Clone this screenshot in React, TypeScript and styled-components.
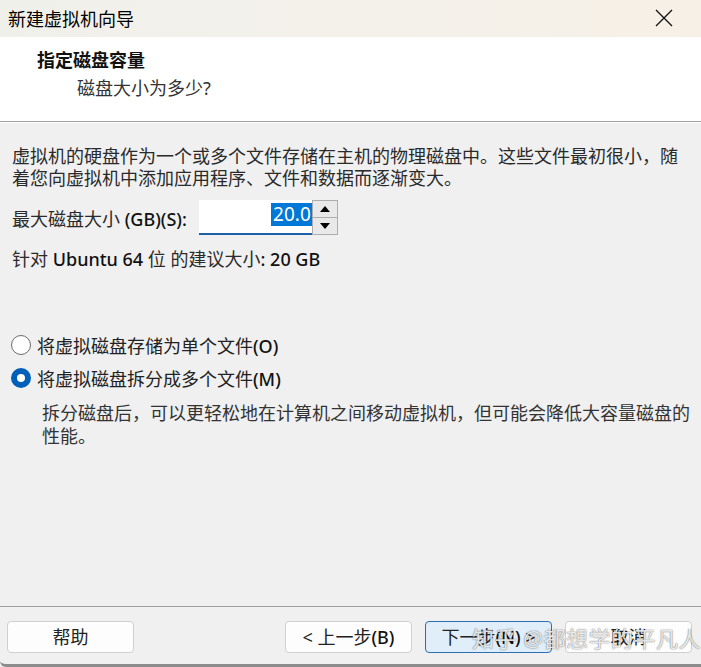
import React, { FC } from 'react'
import styled, { createGlobalStyle } from 'styled-components'

const GlobalStyle = createGlobalStyle`
	html, body {
		margin: 0;
		padding: 0;
		background: #f0f0f0;
	}
	* {
		box-sizing: border-box;
	}
`

const FONT = `"Noto Sans", "Noto Sans CJK SC", sans-serif`

const Window = styled.div`
	position: relative;
	width: 701px;
	height: 667px;
	display: flex;
	flex-direction: column;
	overflow: hidden;
	font-family: ${FONT};
	font-size: 18px;
	color: #222;
	background: #f0f0f0;
	border-bottom: 3px solid #8c8c8c;
	border-bottom-left-radius: 6px;
`

const TitleBar = styled.div`
	height: 37px;
	flex: none;
	display: flex;
	align-items: center;
	justify-content: space-between;
	padding: 0 28px 2px 8px;
	background: linear-gradient(90deg, #f0f0ea 0%, #f4f1ea 60%, #f7f0e6 100%);
	color: #000;
`

const Header = styled.div`
	height: 85px;
	flex: none;
	background: #fff;
	padding: 12px 0 0 37px;
	border-bottom: 1px solid #a0a0a0;
`

const HeaderTitle = styled.div`
	font-weight: 700;
	line-height: 22px;
	color: #111;
`

const HeaderSub = styled.div`
	margin-top: 6px;
	padding-left: 40px;
	line-height: 22px;
	color: #333;
`

const Body = styled.div`
	flex: 1;
	padding: 22px 8px 0 12px;
	border-top: 1px solid #fff;
`

const Paragraph = styled.p<{ $indent?: number; $lh?: number }>`
	margin: 0;
	padding-left: ${(p) => p.$indent ?? 0}px;
	line-height: ${(p) => p.$lh ?? 22}px;
	color: #2a2a2a;
`

const Latin = styled.span`
	color: #111;
	font-weight: 500;
`

const SizeRow = styled.div`
	margin-top: 11px;
	display: flex;
	align-items: center;
	height: 35px;
	gap: 12px;
	color: #2a2a2a;
`

const SpinBox = styled.div`
	display: flex;
	height: 35px;
`

const SpinInput = styled.div`
	width: 113px;
	height: 35px;
	background: #fff;
	border-bottom: 2px solid #1f5fa8;
	display: flex;
	align-items: flex-start;
	justify-content: flex-end;
	padding-top: 3px;
`

const Selected = styled.span`
	background: #0078d7;
	color: #fff;
	line-height: 23px;
	padding: 0 1px 0 2px;
	font-size: 19px;
`

const SpinButtons = styled.div`
	width: 26px;
	display: flex;
	flex-direction: column;
	border: 1px solid #adadad;
	background: #e9e9e9;
`

const SpinBtn = styled.div<{ $down?: boolean }>`
	flex: 1;
	display: flex;
	align-items: center;
	justify-content: center;
	border-top: ${(p) => (p.$down ? '1px solid #adadad' : 'none')};
	&::after {
		content: '';
		width: 0;
		height: 0;
		border-left: 5px solid transparent;
		border-right: 5px solid transparent;
		${(p) => (p.$down ? 'border-top: 6px solid #000;' : 'border-bottom: 6px solid #000;')}
	}
`

const Recommend = styled.div`
	margin-top: 13px;
	line-height: 22px;
	color: #2a2a2a;
`

const RadioGroup = styled.div`
	margin-top: 63px;
	display: flex;
	flex-direction: column;
	gap: 9px;
`

const RadioRow = styled.label`
	display: flex;
	align-items: center;
	height: 24px;
	gap: 6px;
	margin-left: -1px;
	color: #222;
`

const RadioMark = styled.span<{ $checked?: boolean }>`
	width: 20px;
	height: 20px;
	border-radius: 50%;
	flex: none;
	background: ${(p) => (p.$checked ? '#005fb8' : '#fff')};
	border: ${(p) => (p.$checked ? 'none' : '1px solid #6b6b6b')};
	display: flex;
	align-items: center;
	justify-content: center;
	&::after {
		content: '';
		display: ${(p) => (p.$checked ? 'block' : 'none')};
		width: 8px;
		height: 8px;
		border-radius: 50%;
		background: #fff;
	}
`

const Description = styled(Paragraph)`
	margin-top: 12px;
	color: #333;
`

const Footer = styled.div`
	height: 58px;
	flex: none;
	border-top: 1px solid #a0a0a0;
	display: flex;
	align-items: flex-start;
	padding: 14px 9px 0 7px;
	gap: 13px;
`

const Button = styled.button<{ $primary?: boolean }>`
	width: 127px;
	height: 32px;
	border-radius: 4px;
	font-family: ${FONT};
	font-size: 18px;
	color: #222;
	padding: 0;
	background: ${(p) => (p.$primary ? '#e0eef9' : '#fdfdfd')};
	border: 1px solid ${(p) => (p.$primary ? '#2c6fb0' : '#d0d0d0')};
	line-height: 30px;
`

const Spacer = styled.div`
	flex: 1;
`

const Watermark = styled.div`
	position: absolute;
	left: 472px;
	top: 621px;
	font-size: 22px;
	color: rgba(255, 255, 255, 0.85);
	text-shadow: 0 0 1px rgba(0, 0, 0, 0.55), 0 0 2px rgba(0, 0, 0, 0.25);
	pointer-events: none;
	white-space: nowrap;
	letter-spacing: 0.5px;
`

const CloseIcon: FC = () => (
	<svg width="18" height="18" viewBox="0 0 18 18">
		<path d="M1 1 L17 17 M17 1 L1 17" stroke="#111" strokeWidth="1.3" fill="none" />
	</svg>
)

const App: FC = () => (
	<>
		<GlobalStyle />
		<Window>
			<TitleBar>
				<span>新建虚拟机向导</span>
				<CloseIcon />
			</TitleBar>
			<Header>
				<HeaderTitle>指定磁盘容量</HeaderTitle>
				<HeaderSub>磁盘大小为多少?</HeaderSub>
			</Header>
			<Body>
				<Paragraph>
					虚拟机的硬盘作为一个或多个文件存储在主机的物理磁盘中。这些文件最初很小，随着您向虚拟机中添加应用程序、文件和数据而逐渐变大。
				</Paragraph>
				<SizeRow>
					<span>
						最大磁盘大小 <Latin>(GB)(S):</Latin>
					</span>
					<SpinBox>
						<SpinInput>
							<Selected>20.0</Selected>
						</SpinInput>
						<SpinButtons>
							<SpinBtn />
							<SpinBtn $down />
						</SpinButtons>
					</SpinBox>
				</SizeRow>
				<Recommend>
					针对 <Latin>Ubuntu 64</Latin> 位 的建议大小<Latin>: 20 GB</Latin>
				</Recommend>
				<RadioGroup>
					<RadioRow>
						<RadioMark />
						<span>
							将虚拟磁盘存储为单个文件<Latin>(O)</Latin>
						</span>
					</RadioRow>
					<RadioRow>
						<RadioMark $checked />
						<span>
							将虚拟磁盘拆分成多个文件<Latin>(M)</Latin>
						</span>
					</RadioRow>
				</RadioGroup>
				<Description $indent={30} $lh={23}>
					拆分磁盘后，可以更轻松地在计算机之间移动虚拟机，但可能会降低大容量磁盘的性能。
				</Description>
			</Body>
			<Footer>
				<Button>帮助</Button>
				<Spacer />
				<Button>
					&lt; 上一步<Latin>(B)</Latin>
				</Button>
				<Button $primary>
					下一步<Latin>(N)</Latin> &gt;
				</Button>
				<Button>取消</Button>
			</Footer>
			<Watermark>知乎 @都想学的平凡人</Watermark>
		</Window>
	</>
)

export default App
